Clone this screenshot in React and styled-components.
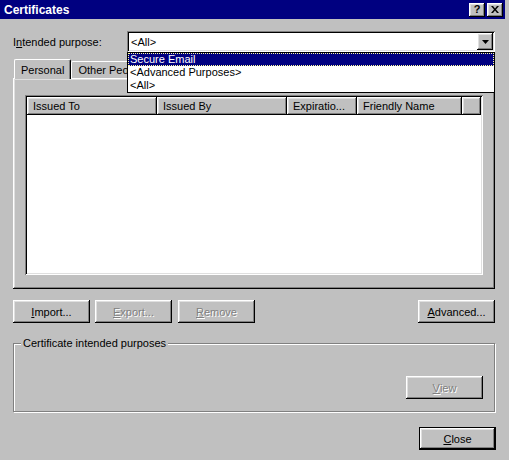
import React from 'react'
import styled, { createGlobalStyle, css } from 'styled-components'

const GlobalStyle = createGlobalStyle`
  * { box-sizing: border-box; }
  html, body { margin: 0; padding: 0; background: #c0c0c0; }
  body {
    font-family: "Liberation Sans", Arial, sans-serif;
    font-size: 11px;
    color: #000;
  }
`

const raised = css`
  box-shadow: inset -1px -1px #000, inset 1px 1px #fff,
    inset -2px -2px #808080, inset 2px 2px #dfdfdf;
`

const sunken = css`
  box-shadow: inset 1px 1px #808080, inset -1px -1px #fff,
    inset 2px 2px #000, inset -2px -2px #dfdfdf;
`

const Window = styled.div`
  position: relative;
  width: 509px;
  height: 460px;
  overflow: hidden;
  background: #c0c0c0;
`

const TitleBar = styled.div`
  height: 19px;
  margin-right: 4px;
  background: #000080;
  color: #fff;
  display: flex;
  align-items: center;
  padding: 0 2px 0 4px;
  font-size: 12px;
  font-weight: bold;
  .caption { flex: 1; }
`

const CapButton = styled.div`
  width: 16px;
  height: 14px;
  background: #c0c0c0;
  ${raised}
  margin-left: 2px;
  display: flex;
  align-items: center;
  justify-content: center;
  color: #000;
  font-size: 11px;
  font-weight: bold;
  padding-bottom: 1px;
`

const Client = styled.div`
  position: relative;
  padding: 12px 14px 0 13px;
`

const PurposeRow = styled.div`
  height: 21px;
  display: flex;
  align-items: center;
  .label { width: 114px; }
`

const Combo = styled.div`
  position: relative;
  flex: 1;
  height: 21px;
  background: #fff;
  ${sunken}
  display: flex;
  align-items: center;
  padding-left: 4px;
  .value { flex: 1; }
`

const DropButton = styled.div`
  width: 16px;
  height: 17px;
  margin-right: 2px;
  background: #c0c0c0;
  ${raised}
  display: flex;
  align-items: center;
  justify-content: center;
`

const DropList = styled.div`
  position: absolute;
  top: 33px;
  left: 127px;
  width: 368px;
  border: 1px solid #000;
  background: #fff;
  z-index: 10;
`

const DropItem = styled.div`
  height: 13px;
  line-height: 13px;
  padding-left: 2px;
  background: ${p => (p.$selected ? '#000080' : '#fff')};
  color: ${p => (p.$selected ? '#fff' : '#000')};
  outline: ${p => (p.$selected ? '1px dotted #ffff9a' : 'none')};
  outline-offset: -1px;
`

const TabStrip = styled.div`
  margin-top: 7px;
  height: 19px;
  display: flex;
  align-items: flex-end;
  padding-left: 1px;
  position: relative;
  z-index: 2;
`

const Tab = styled.div`
  height: ${p => (p.$active ? 20 : 17)}px;
  margin-bottom: ${p => (p.$active ? -1 : 0)}px;
  padding: 0 6px;
  display: flex;
  align-items: center;
  background: #c0c0c0;
  border-top: 1px solid #fff;
  border-left: 1px solid #fff;
  border-right: 1px solid #000;
  box-shadow: inset -1px 0 #808080;
  border-top-left-radius: 2px;
  border-top-right-radius: 2px;
  white-space: nowrap;
  overflow: hidden;
  max-width: ${p => p.$max || 'none'};
`

const TabPanel = styled.div`
  position: relative;
  z-index: 1;
  height: 211px;
  background: #c0c0c0;
  ${raised}
  padding: 17px 12px 14px 12px;
`

const ListView = styled.div`
  height: 100%;
  background: #fff;
  ${sunken}
  padding: 2px;
`

const Header = styled.div`
  display: flex;
  height: 18px;
`

const HeaderCell = styled.div`
  width: ${p => (p.$w ? `${p.$w}px` : 'auto')};
  flex: ${p => (p.$w ? 'none' : 1)};
  height: 18px;
  background: #c0c0c0;
  ${raised}
  padding-left: 6px;
  display: flex;
  align-items: center;
  white-space: nowrap;
  overflow: hidden;
`

const ButtonRow = styled.div`
  margin-top: 11px;
  display: flex;
`

const Button = styled.div`
  width: 77px;
  height: 23px;
  margin-left: ${p => p.$gap || 0}px;
  background: #c0c0c0;
  ${raised}
  display: flex;
  align-items: center;
  justify-content: center;
  color: ${p => (p.$disabled ? '#808080' : '#000')};
  text-shadow: ${p => (p.$disabled ? '1px 1px 0 #fff' : 'none')};
  ${p => p.$default && css`
    border: 1px solid #000;
  `}
`

const Spacer = styled.div`
  flex: 1;
`

const GroupBox = styled.div`
  position: relative;
  margin-top: 20px;
  height: 69px;
  border: 1px solid #808080;
  box-shadow: 1px 1px 0 #fff, inset 1px 1px 0 #fff;
  display: flex;
  justify-content: flex-end;
  align-items: flex-end;
  padding: 0 11px 12px 0;
  .legend {
    position: absolute;
    top: -7px;
    left: 7px;
    padding: 0 2px;
    background: #c0c0c0;
  }
`

const CloseRow = styled.div`
  margin-top: 15px;
  display: flex;
  justify-content: flex-end;
  margin-right: -1px;
`

export default function App() {
  return (
    <>
      <GlobalStyle />
      <Window>
        <TitleBar>
          <span className="caption">Certificates</span>
          <CapButton>?</CapButton>
          <CapButton>
            <svg width="8" height="7" viewBox="0 0 8 7">
              <path d="M0 0h2l2 2.5L6 0h2L5 3.5 8 7H6L4 4.5 2 7H0l3-3.5z" fill="#000" />
            </svg>
          </CapButton>
        </TitleBar>
        <Client>
          <PurposeRow>
            <span className="label">I<u>n</u>tended purpose:</span>
            <Combo>
              <span className="value">&lt;All&gt;</span>
              <DropButton>
                <svg width="7" height="4" viewBox="0 0 7 4">
                  <path d="M0 0h7L3.5 4z" fill="#000" />
                </svg>
              </DropButton>
            </Combo>
          </PurposeRow>
          <DropList>
            <DropItem $selected>Secure Email</DropItem>
            <DropItem>&lt;Advanced Purposes&gt;</DropItem>
            <DropItem>&lt;All&gt;</DropItem>
          </DropList>
          <TabStrip>
            <Tab $active>Personal</Tab>
            <Tab $max="58px">Other Peop</Tab>
          </TabStrip>
          <TabPanel>
            <ListView>
              <Header>
                <HeaderCell $w={130}>Issued To</HeaderCell>
                <HeaderCell $w={130}>Issued By</HeaderCell>
                <HeaderCell $w={70}>Expiratio...</HeaderCell>
                <HeaderCell $w={105}>Friendly Name</HeaderCell>
                <HeaderCell />
              </Header>
            </ListView>
          </TabPanel>
          <ButtonRow>
            <Button><u>I</u>mport...</Button>
            <Button $gap={5} $disabled><u>E</u>xport...</Button>
            <Button $gap={6} $disabled><u>R</u>emove</Button>
            <Spacer />
            <Button><u>A</u>dvanced...</Button>
          </ButtonRow>
          <GroupBox>
            <span className="legend">Certificate intended purposes</span>
            <Button $disabled><u>V</u>iew</Button>
          </GroupBox>
          <CloseRow>
            <Button $default><u>C</u>lose</Button>
          </CloseRow>
        </Client>
      </Window>
    </>
  )
}
